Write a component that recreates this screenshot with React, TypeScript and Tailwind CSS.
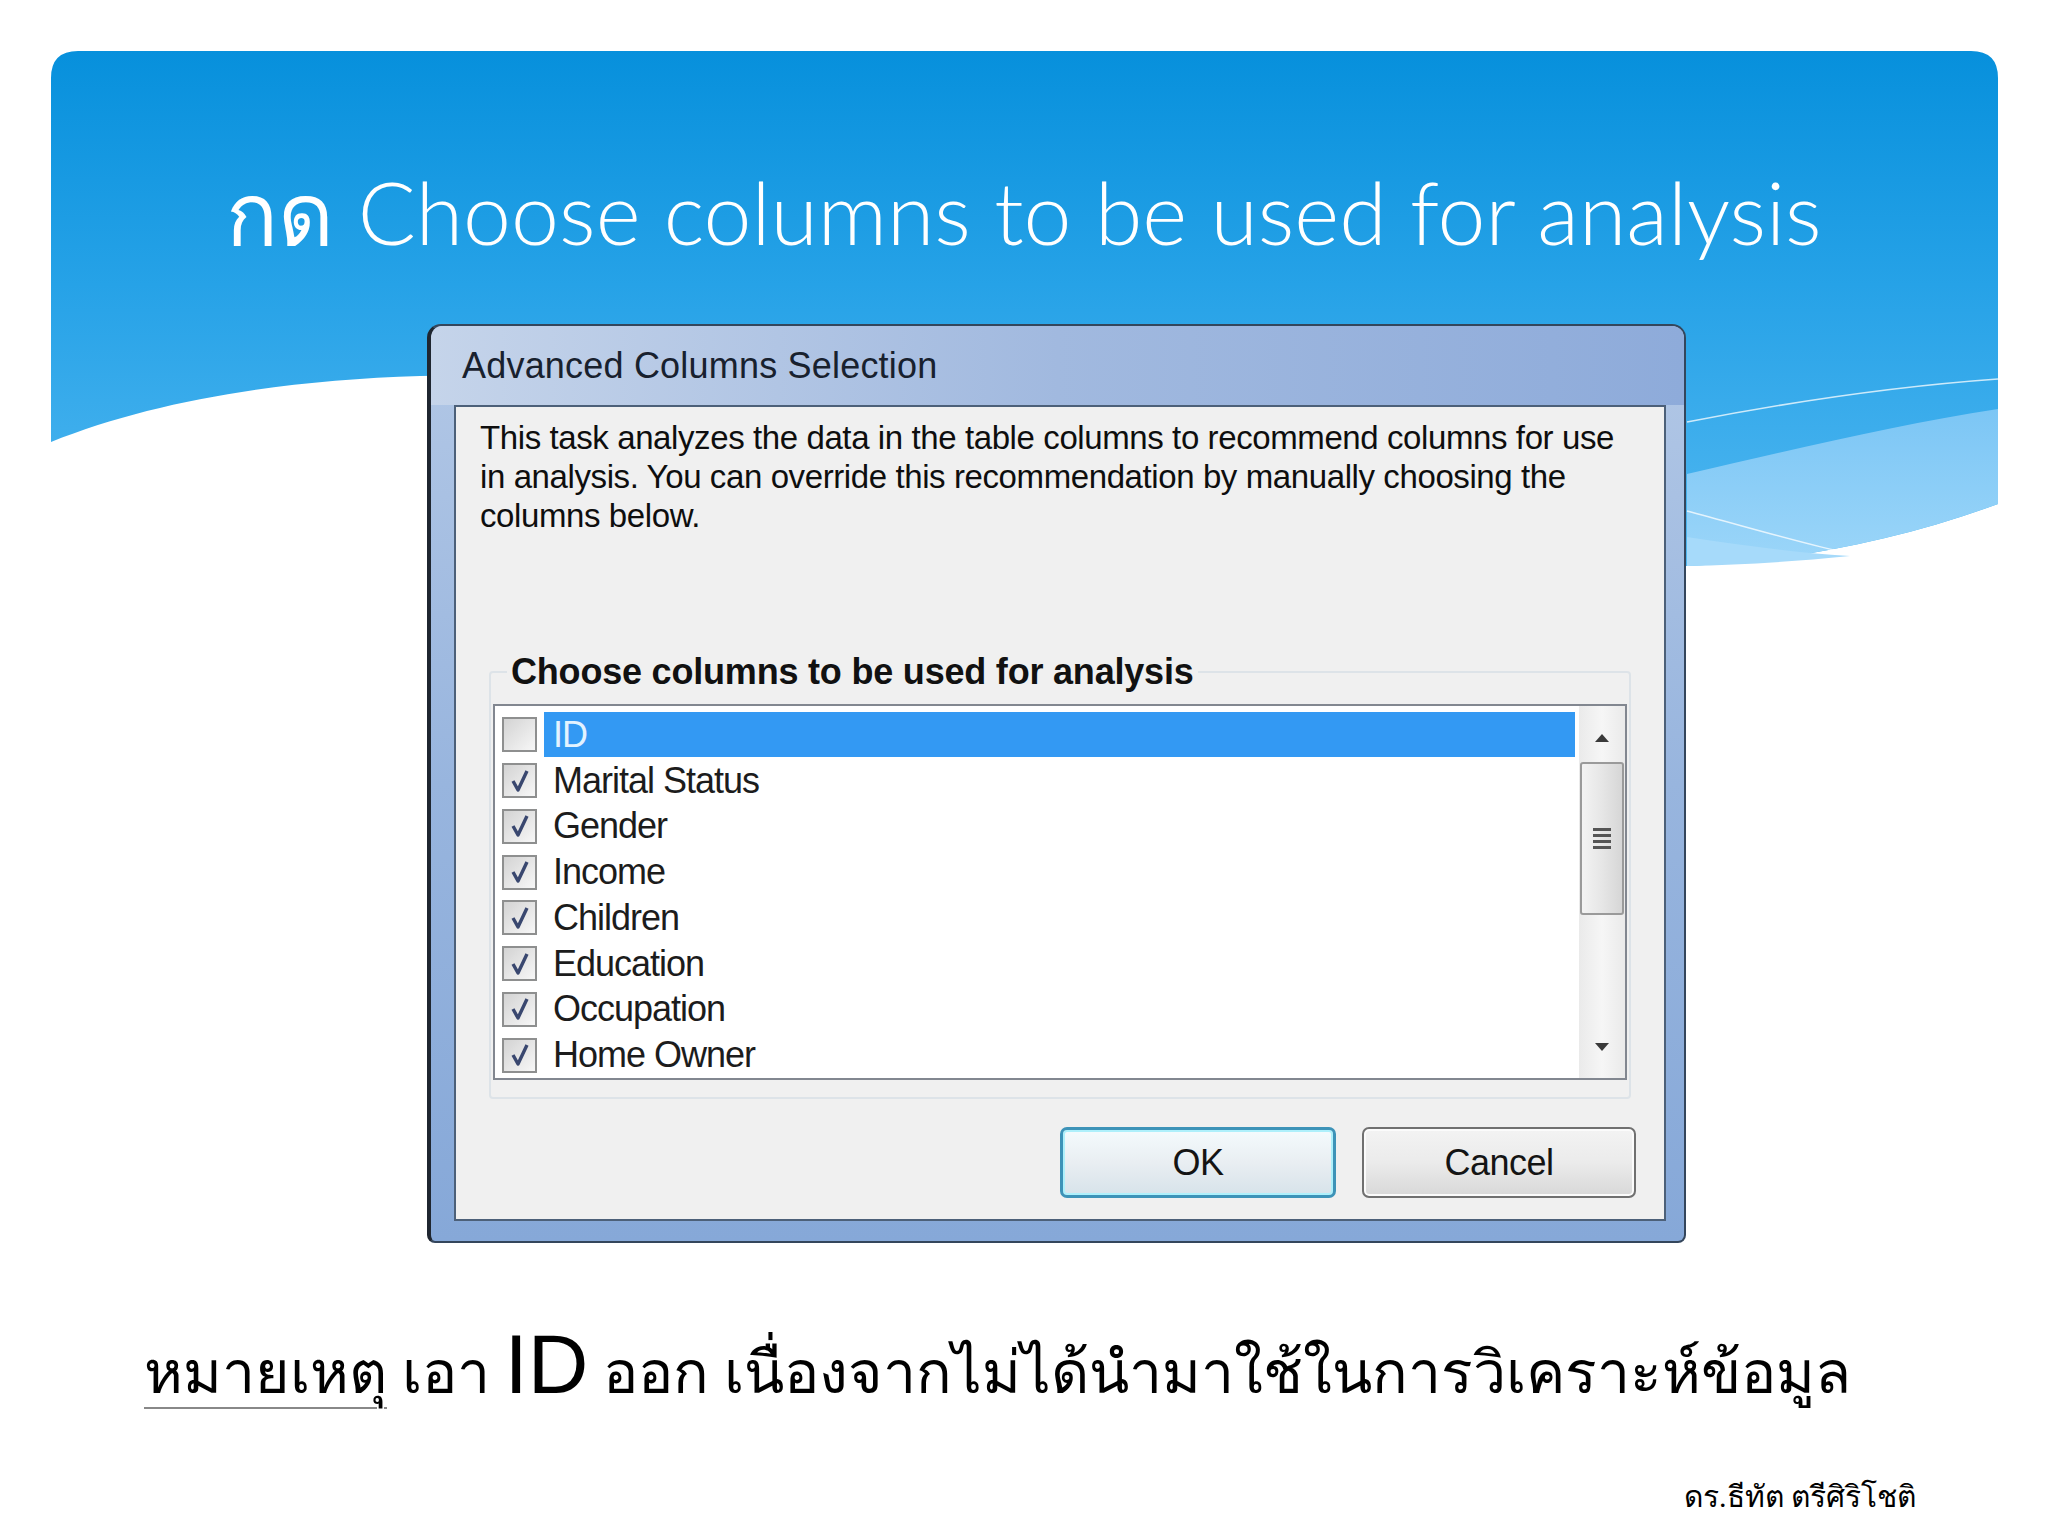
import React from "react";

const columns = [
  "ID",
  "Marital Status",
  "Gender",
  "Income",
  "Children",
  "Education",
  "Occupation",
  "Home Owner",
];

const Check = ({ on }: { on: boolean }) => (
  <div className="w-[35px] h-[35px] shrink-0 border-2 border-[#8e8f8f] bg-gradient-to-br from-[#d3d3d3] to-[#f7f7f7] flex items-center justify-center">
    {on && (
      <svg width="24" height="26" viewBox="0 0 24 26">
        <path d="M5 13 L10 22 L19 3" stroke="#39476f" strokeWidth="3.4" fill="none" strokeLinejoin="round" />
      </svg>
    )}
  </div>
);

const SlideBackground = () => (
  <svg className="absolute inset-0" width="2048" height="1536" viewBox="0 0 2048 1536">
    <defs>
      <linearGradient id="sky" x1="0" y1="51" x2="0" y2="570" gradientUnits="userSpaceOnUse">
        <stop offset="0" stopColor="#0790dc" />
        <stop offset="0.45" stopColor="#26a2e7" />
        <stop offset="1" stopColor="#52b8f1" />
      </linearGradient>
      <linearGradient id="band" x1="0" y1="410" x2="0" y2="566" gradientUnits="userSpaceOnUse">
        <stop offset="0" stopColor="#7cc6f5" />
        <stop offset="1" stopColor="#9cd6f9" />
      </linearGradient>
    </defs>
    <path
      d="M51,78 Q51,51 78,51 L1971,51 Q1998,51 1998,78 L1998,504 C1900,540 1790,562 1687,566 L1000,566 C800,400 600,372 420,376 C280,380 150,402 51,442 Z"
      fill="url(#sky)"
    />
    <path d="M1687,474 C1800,448 1900,424 1998,409 L1998,504 C1900,540 1790,562 1687,566 Z" fill="url(#band)" />
    <path d="M1687,537 C1740,545 1790,552 1850,556 C1790,562 1740,565 1687,566 Z" fill="#a6dafa" />
    <path d="M1687,422 C1800,400 1900,386 1998,379" stroke="#ffffff" strokeOpacity="0.75" strokeWidth="1.5" fill="none" />
    <path d="M1687,511 C1740,525 1790,540 1842,552" stroke="#ffffff" strokeOpacity="0.75" strokeWidth="1.5" fill="none" />
  </svg>
);

const Dialog = () => (
  <div className="ml-[427px] w-[1259px] h-[919px] flex flex-col rounded-t-[14px] rounded-b-[8px] border-2 border-[#34465c] border-l-[4px] border-l-[#1f2630] bg-gradient-to-b from-[#b3c8e6] via-[#98b5de] to-[#86a8d8] pl-[23px] pr-[18px] pb-[20px] font-['Liberation_Sans',Arial,sans-serif]">
    {/* title bar */}
    <div className="h-[79px] shrink-0 flex items-center bg-gradient-to-r from-[#c5d4ea] via-[#a1b9df] to-[#8eabda] -ml-[23px] -mr-[18px] pl-[31px] rounded-t-[12px]">
      <span className="text-[36px] text-[#18212e] tracking-[0.2px]">Advanced Columns Selection</span>
    </div>

    {/* client area */}
    <div className="flex-1 flex flex-col border-2 border-[#4c6079] bg-[#f0f0f0]">
      <p className="pl-[24px] pt-[11px] text-[33px] leading-[39px] text-[#0e0e0e] tracking-[-0.4px]">
        This task analyzes the data in the table columns to recommend columns for use
        <br />
        in analysis. You can override this recommendation by manually choosing the
        <br />
        columns below.
      </p>

      <fieldset className="ml-[33px] w-[1142px] mt-[116px] border-2 border-[#dde3e8] rounded-[4px] pb-[17px] px-[2px]">
        <legend className="ml-[14px] px-[4px] text-[36px] leading-[42px] font-bold text-[#111] tracking-[-0.2px]">
          Choose columns to be used for analysis
        </legend>
        <div className="mt-[11px] h-[376px] border-2 border-[#828790] bg-white flex pl-[7px] pt-[6px]">
          <div className="flex-1 flex flex-col">
            {columns.map((c, i) => (
              <div key={c} className="h-[46px] flex items-center">
                <Check on={i !== 0} />
                <div
                  className={
                    i === 0
                      ? "ml-[7px] flex-1 h-[45px] flex items-center pl-[9px] bg-[#3399f3] text-[#e3f3ff]"
                      : "ml-[7px] flex-1 h-[45px] flex items-center pl-[9px] text-[#1c1c1c]"
                  }
                >
                  <span className="text-[36px] tracking-[-1px]">{c}</span>
                </div>
              </div>
            ))}
          </div>

          {/* scrollbar */}
          <div className="w-[46px] ml-[4px] -mt-[6px] flex flex-col items-center bg-gradient-to-r from-[#eaeaea] via-[#f6f6f6] to-[#eaeaea]">
            <div className="h-[56px] w-full flex items-center justify-center pt-[8px]">
              <svg width="16" height="10" viewBox="0 0 16 10">
                <path d="M8 1 L15 9 L1 9 Z" fill="#3a3a3a" />
              </svg>
            </div>
            <div className="w-[44px] h-[153px] border-2 border-[#9a9a9a] rounded-[3px] bg-gradient-to-r from-[#f3f3f3] via-[#e6e6e6] to-[#d6d6d6] flex flex-col items-center justify-center gap-[3px]">
              <div className="w-[18px] h-[3px] bg-[#555]" />
              <div className="w-[18px] h-[3px] bg-[#555]" />
              <div className="w-[18px] h-[3px] bg-[#555]" />
              <div className="w-[18px] h-[3px] bg-[#555]" />
            </div>
            <div className="flex-1" />
            <div className="h-[52px] w-full flex items-center justify-center pb-[10px]">
              <svg width="16" height="10" viewBox="0 0 16 10">
                <path d="M1 1 L15 1 L8 9 Z" fill="#3a3a3a" />
              </svg>
            </div>
          </div>
        </div>
      </fieldset>

      <div className="mt-[28px] flex justify-end gap-[26px] pr-[28px]">
        <button className="w-[276px] h-[71px] rounded-[7px] border-[3px] border-[#3d93b8] bg-gradient-to-b from-[#f4fbfd] via-[#e9eef2] to-[#d7e3ea] shadow-[inset_0_0_0_2px_#aef0fb] text-[36px] text-[#141414] tracking-[-0.5px]">
          OK
        </button>
        <button className="w-[274px] h-[71px] rounded-[7px] border-2 border-[#707070] bg-gradient-to-b from-[#f3f3f3] via-[#ebebeb] to-[#d8d8d8] shadow-[inset_0_0_0_2px_#fbfbfb] text-[36px] text-[#141414] tracking-[-0.5px]">
          Cancel
        </button>
      </div>
    </div>
  </div>
);

export default function App() {
  return (
    <div className="relative w-[2048px] h-[1536px] overflow-hidden bg-white">
      <SlideBackground />
      <div className="relative flex flex-col">
        <h1 className="mt-[152px] h-[120px] text-center text-[86px] leading-[120px] font-light text-white font-['Lato','Noto_Sans',sans-serif]">
          กด Choose columns to be used for analysis
        </h1>
        <div className="mt-[52px]">
          <Dialog />
        </div>
        <p className="mt-[71px] ml-[144px] whitespace-nowrap text-[59px] leading-[100px] text-black font-['Liberation_Serif',serif]">
          <span className="underline decoration-[#888] decoration-2 underline-offset-[14px]">หมายเหตุ</span> เอา{" "}
          <span className="text-[84px] font-['Liberation_Sans',sans-serif]">ID</span> ออก เนื่องจากไม่ได้นำมาใช้ในการวิเคราะห์ข้อมูล
        </p>
        <p className="mt-[49px] mr-[132px] self-end whitespace-nowrap text-[30px] leading-[50px] text-black font-['Liberation_Serif',serif]">
          ดร.ธีทัต ตรีศิริโชติ
        </p>
      </div>
    </div>
  );
}
